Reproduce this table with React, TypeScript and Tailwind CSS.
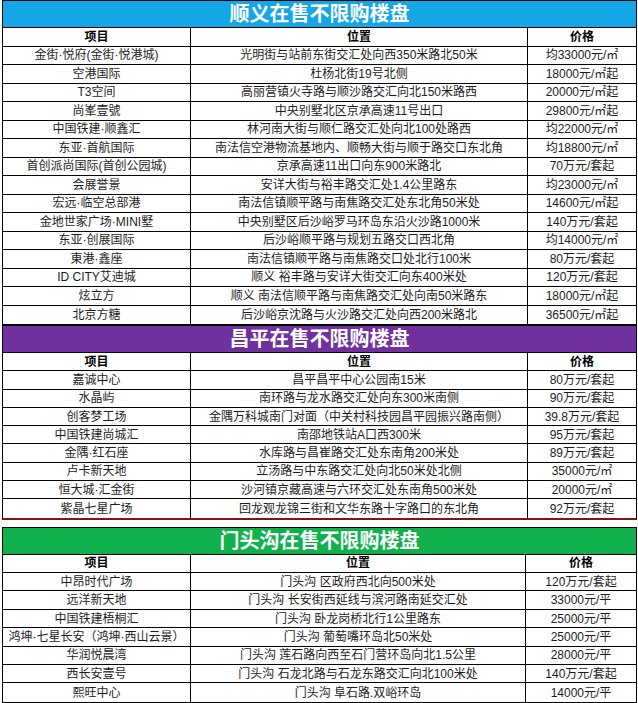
import React from "react";

type Row = [string, string, string];

const shunyi: Row[] = [
  ["金街·悦府(金街·悦港城)", "光明街与站前东街交汇处向西350米路北50米", "均33000元/㎡"],
  ["空港国际", "杜杨北街19号北侧", "18000元/㎡起"],
  ["T3空间", "高丽营镇火寺路与顺沙路交汇向北150米路西", "20000元/㎡起"],
  ["尚峯壹號", "中央别墅北区京承高速11号出口", "29800元/㎡起"],
  ["中国铁建·顺鑫汇", "林河南大街与顺仁路交汇处向北100处路西", "均22000元/㎡"],
  ["东亚·首航国际", "南法信空港物流基地内、顺畅大街与顺于路交口东北角", "均18800元/㎡"],
  ["首创派尚国际(首创公园城)", "京承高速11出口向东900米路北", "70万元/套起"],
  ["会展誉景", "安详大街与裕丰路交汇处1.4公里路东", "均23000元/㎡"],
  ["宏远·临空总部港", "南法信镇顺平路与南焦路交汇处东北角50米处", "14600元/㎡起"],
  ["金地世家广场·MINI墅", "中央别墅区后沙峪罗马环岛东沿火沙路1000米", "140万元/套起"],
  ["东亚·创展国际", "后沙峪顺平路与规划五路交口西北角", "均14000元/㎡"],
  ["東港·鑫座", "南法信镇顺平路与南焦路交口处北行100米", "80万元/套起"],
  ["ID CITY艾迪城", "顺义 裕丰路与安详大街交汇向东400米处", "120万元/套起"],
  ["炫立方", "顺义 南法信顺平路与南焦路交汇处向南50米路东", "18000元/㎡起"],
  ["北京方糖", "后沙峪京沈路与火沙路交汇处向西200米路北", "36500元/㎡起"],
];

const changping: Row[] = [
  ["嘉诚中心", "昌平昌平中心公园南15米", "80万元/套起"],
  ["水晶屿", "南环路与龙水路交汇处向东300米南侧", "90万元/套起"],
  ["创客梦工场", "金隅万科城南门对面（中关村科技园昌平园振兴路南侧）", "39.8万元/套起"],
  ["中国铁建尚城汇", "南邵地铁站A口西300米", "95万元/套起"],
  ["金隅·红石座", "水库路与昌崔路交汇处东南角200米处", "89万元/套起"],
  ["卢卡新天地", "立汤路与中东路交汇处向北50米处北侧", "35000元/㎡"],
  ["恒大城·汇金街", "沙河镇京藏高速与六环交汇处东南角500米处", "20000元/㎡"],
  ["紫晶七星广场", "回龙观龙锦三街和文华东路十字路口的东北角", "92万元/套起"],
];

const mentougou: Row[] = [
  ["中昂时代广场", "门头沟 区政府西北向500米处", "120万元/套起"],
  ["远洋新天地", "门头沟 长安街西延线与滨河路南延交汇处", "33000元/平"],
  ["中国铁建梧桐汇", "门头沟 卧龙岗桥北行1公里路东", "25000元/平"],
  ["鸿坤·七星长安（鸿坤·西山云景）", "门头沟 葡萄嘴环岛北50米处", "25000元/平"],
  ["华润悦晨湾", "门头沟 莲石路向西至石门营环岛向北1.5公里", "28000元/平"],
  ["西长安壹号", "门头沟 石龙北路与石龙东路交汇向北100米处", "140万元/套起"],
  ["熙旺中心", "门头沟 阜石路.双峪环岛", "14000元/平"],
];

function Table({
  title,
  titleClass,
  rows,
  rowClass,
  gridClass,
  bottomClass,
}: {
  title: string;
  titleClass: string;
  rows: Row[];
  rowClass: string;
  gridClass: string;
  bottomClass: string;
}) {
  const all: Row[] = [["项目", "位置", "价格"], ...rows];
  return (
    <div className={`border-x border-t border-black ${bottomClass}`}>
      <div
        className={`h-[27px] flex items-center justify-center border-b border-black text-white font-bold text-[20px] leading-none ${titleClass}`}
      >
        {title}
      </div>
      {all.map((r, i) => (
        <div
          key={i}
          className={`grid ${gridClass} ${rowClass} ${
            i < all.length - 1 ? "border-b border-black" : ""
          } text-[12px] text-[#1c1c1c] ${i === 0 ? "font-bold text-black" : ""}`}
        >
          <div className="border-r border-black flex items-center justify-center whitespace-nowrap overflow-hidden">
            {r[0]}
          </div>
          <div className="border-r border-black flex items-center justify-center whitespace-nowrap overflow-hidden">
            {r[1]}
          </div>
          <div className="flex items-center justify-center whitespace-nowrap overflow-hidden">
            {r[2]}
          </div>
        </div>
      ))}
    </div>
  );
}

export default function App() {
  return (
    <div
      className="w-[638px] h-[703px] overflow-hidden bg-white"
      style={{ fontFamily: '"Liberation Sans", "Noto Sans CJK SC", "Microsoft YaHei", sans-serif' }}
    >
      <div className="ml-[2px] w-[635px]">
        <Table
          title="顺义在售不限购楼盘"
          titleClass="bg-[#14a6e6]"
          rows={shunyi}
          rowClass="h-[18.5px]"
          gridClass="grid-cols-[188px_337px_1fr]"
          bottomClass="border-b"
        />
        <Table
          title="昌平在售不限购楼盘"
          titleClass="bg-[#7030a0]"
          rows={changping}
          rowClass="h-[18.3px]"
          gridClass="grid-cols-[188px_337px_1fr]"
          bottomClass="border-b-2 border-b-[#7a1818]"
        />
        <div className="h-[7px]" />
        <Table
          title="门头沟在售不限购楼盘"
          titleClass="bg-[#10b04c]"
          rows={mentougou}
          rowClass="h-[18.4px]"
          gridClass="grid-cols-[188px_335px_1fr]"
          bottomClass="border-b"
        />
        <div className="h-[6px] bg-[#fff33a]" />
      </div>
    </div>
  );
}
